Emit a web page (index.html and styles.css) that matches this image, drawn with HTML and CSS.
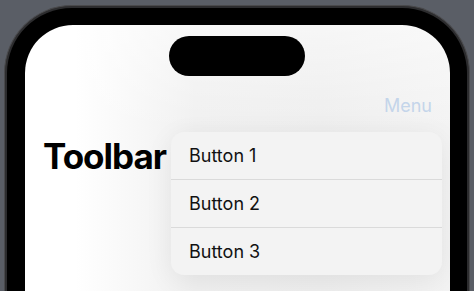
FILE: index.html
```html
<!DOCTYPE html>
<html lang="en">
<head>
    <meta charset="UTF-8">
    <meta name="viewport" content="width=device-width, initial-scale=1.0">
    <title>Toolbar Menu</title>
    <link rel="stylesheet" href="styles.css">
</head>
<body>
    <div class="device">
        <div class="bezel">
            <div class="screen">
                <div class="island"></div>
                <header class="nav-bar">
                    <button class="menu-btn">Menu</button>
                </header>
                <h1 class="title">Toolbar</h1>
                <!-- open menu popover -->
                <ul class="menu-pop">
                    <li class="menu-item">Button 1</li>
                    <li class="menu-item">Button 2</li>
                    <li class="menu-item">Button 3</li>
                </ul>
            </div>
        </div>
    </div>
</body>
</html>
```

FILE: styles.css
```css
body {
    margin: 0;
    padding: 0;
    background-color: #5a5e66;
    font-family: Inter, "Open Sans", sans-serif;
    overflow: hidden;
}

.device {
    margin: 5px 0 0 4px;
    width: 466px;
    height: 286px;
    box-sizing: border-box;
    padding: 2px 2px 0 2px;
    background-color: #2c2c2e;
    border: 1px solid #4a4a4c;
    border-bottom: none;
    border-radius: 68px 68px 0 0;
}

.bezel {
    height: 100%;
    box-sizing: border-box;
    padding: 17px 17px 0 18px;
    background-color: #000;
    border-radius: 65px 65px 0 0;
}

.screen {
    position: relative;
    height: 100%;
    border-radius: 48px 48px 0 0;
    overflow: hidden;
    background:
        linear-gradient(to bottom, rgba(255, 255, 255, 0.5), rgba(255, 255, 255, 0) 40%),
        linear-gradient(to right, #ffffff 0, #ffffff 12%, #f0f0f0 40%, #eeeeee 70%, #f3f3f3 100%);
}

.island {
    position: absolute;
    top: 11px;
    left: 144px;
    width: 136px;
    height: 40px;
    background-color: #000;
    border-radius: 20px;
}

.nav-bar {
    display: flex;
    justify-content: flex-end;
    padding: 70px 18px 0 18px;
}

.menu-btn {
    padding: 0;
    border: none;
    background: none;
    font-family: inherit;
    font-size: 18px;
    line-height: 22px;
    color: #c4d5ea;
}

.title {
    margin: 17px 0 0 18px;
    font-size: 35px;
    line-height: 44px;
    font-weight: 700;
    letter-spacing: -1px;
    color: #000;
}

.menu-pop {
    position: absolute;
    top: 107px;
    left: 146px;
    width: 271px;
    margin: 0;
    padding: 0;
    list-style: none;
    background-color: #f3f3f3;
    border-radius: 13px;
    box-shadow: 0 6px 28px rgba(0, 0, 0, 0.07);
}

.menu-item {
    height: 47px;
    display: flex;
    align-items: center;
    padding: 0 18px;
    font-size: 18px;
    line-height: 22px;
    color: #111;
    border-top: 1px solid #dadada;
}

.menu-item:first-child {
    border-top: none;
}
```
